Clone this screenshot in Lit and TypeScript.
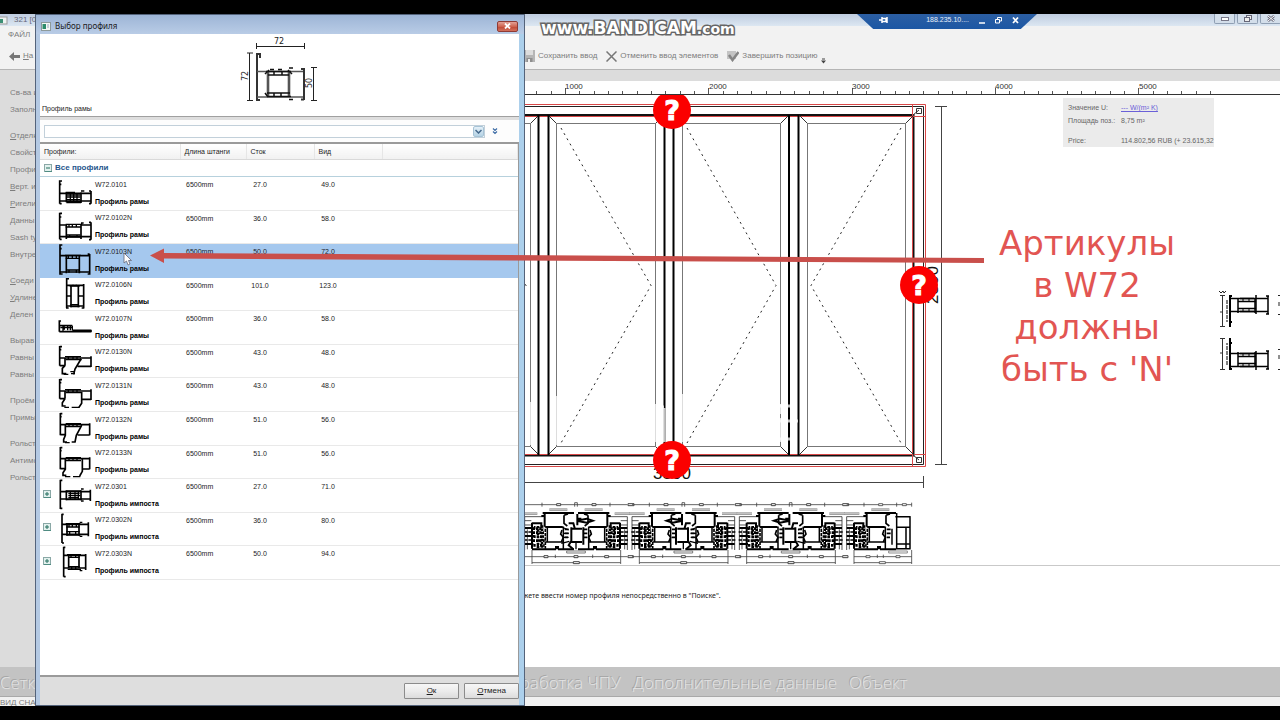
import { LitElement, html, svg, css } from "lit";
import { customElement, property } from "lit/decorators.js";

interface Profile {
  name: string;
  kind: string;
  stock: string;
  view: string;
  child?: boolean;
  selected?: boolean;
  shape: string;
  detail: string;
}

const FRAME = "Профиль рамы";
const MULLION = "Профиль импоста";

/* Cross-sections, drawn on a 108 x 96 grid. */
const profiles: Profile[] = [
  { name: "W72.0101", kind: FRAME, stock: "27.0", view: "49.0",
    shape: "M8 10V80M8 12h7M8 22h5M8 80h6M8 49H102M8 72H102M102 42V80M96 42h6M96 80h6M28 46V76M72 46V78M28 76h44",
    detail: "M26 46H54M30 60H70M30 54H70M30 68H70M40 46V76M50 50V72M60 50V76M72 42h10" },
  { name: "W72.0102N", kind: FRAME, stock: "36.0", view: "58.0",
    shape: "M8 5V85M8 7h7M8 18h5M8 85h6M8 42H30M72 42H102M8 77H102M102 34V86M96 34h6M96 86h6M28 42V84M72 40V84",
    detail: "M26 40H76M26 48H72M30 72H70M30 78H70M36 40v8M46 42v6M58 40v8M72 36h8M38 72v8M60 72v8" },
  { name: "W72.0103N", kind: FRAME, stock: "50.0", view: "72.0", selected: true,
    shape: "M9 1V92M9 3h7M9 14h5M9 90h8M9 35H98M9 84H98M98 30V92M92 30h6M92 90h6M28 35V88M67 35V88",
    detail: "M24 34H72M26 43H68M30 78H66M34 34v8M46 36v6M58 34v8M36 78v8M58 78v8" },
  { name: "W72.0106N", kind: FRAME, stock: "101.0", view: "123.0",
    shape: "M29 0V90M29 2h7M27 90h8M29 22H80M29 84H80M80 18V90M74 90h8M42 20V88M64 20V88",
    detail: "M38 24H68M40 80H66M40 86H68M29 54H42M64 54H80M48 20v4M58 20v4" },
  { name: "W72.0107N", kind: FRAME, stock: "36.0", view: "58.0",
    shape: "M7 28V62M7 30h5M7 44H46M7 62H102M46 58H102M102 56v8",
    detail: "M10 50H44M18 42V60M32 42V58M22 46V56M40 42V58M46 44V58" },
  { name: "W72.0130N", kind: FRAME, stock: "43.0", view: "48.0",
    shape: "M8 3V62M8 5h7M8 14h5M8 39H102M102 34V66M62 64H102M8 62H24M24 39V62M24 62L16 70V86H28M72 42L54 72L50 88",
    detail: "M24 35H72M26 44H74M34 34v10M48 36v8M60 34v10M20 88H34M42 86H54M40 80L54 80" },
  { name: "W72.0131N", kind: FRAME, stock: "43.0", view: "48.0",
    shape: "M8 3V62M8 5h7M8 14h5M8 39H102M102 34V66M74 64H102M8 62H24M24 39V62M24 62L16 74V84H26M74 42V76L66 88",
    detail: "M24 35H72M26 44H74M34 34v10M48 36v8M60 34v10M22 88H36M44 88H68" },
  { name: "W72.0132N", kind: FRAME, stock: "51.0", view: "56.0",
    shape: "M10 3V70M10 5h6M10 14h4M10 38H98M98 34V70M62 69H98M10 68H25M25 38V70L20 82V90H30M74 40L58 70L54 90",
    detail: "M26 35H72M26 44H72M36 34v8M48 34v8M60 34v8M24 92H38M44 90H56" },
  { name: "W72.0133N", kind: FRAME, stock: "51.0", view: "56.0",
    shape: "M10 3V70M10 5h6M10 14h4M10 38H98M98 34V70M76 69H98M10 68H25M25 38V70L18 80V88H28M76 40V76L68 90",
    detail: "M26 35H72M26 44H72M36 34v8M48 34v8M60 34v8M24 92H40M48 92H70" },
  { name: "W72.0301", kind: MULLION, stock: "27.0", view: "71.0", child: true,
    shape: "M10 2V90M10 4h6M10 88h6M10 38H100M10 60H100M100 32V66M28 34V64M72 34V64",
    detail: "M28 36H72M28 62H72M34 44H68M34 50H70M34 56H66M40 36V62M54 34V62M64 36V62M72 30h8M72 66h8" },
  { name: "W72.0302N", kind: MULLION, stock: "36.0", view: "80.0", child: true,
    shape: "M15 2V90M15 4h5M15 90h6M15 34H94M15 64H94M94 28V70M30 32V68M66 32V68",
    detail: "M26 32H70M28 42H68M28 56H68M28 66H70M36 32v10M46 32v10M58 32v10M38 56v10M56 56v10M68 28h8M68 70h8" },
  { name: "W72.0303N", kind: MULLION, stock: "50.0", view: "94.0", child: true,
    shape: "M20 2V92M20 4h5M20 92h6M20 28H86M20 66H86M86 24V72M35 28V68M66 28V68",
    detail: "M30 26H72M34 34H68M34 62H68M32 70H72M42 26v8M56 26v8M44 62v8M56 62v8M68 74h8" },
];

interface Command {
  text: string;
  hotkey?: boolean;
}

const sidebarGroups: Command[][] = [
  [{ text: "Св-ва и" }, { text: "Заполн" }],
  [
    { text: "Отделк", hotkey: true }, { text: "Свойст" }, { text: "Профи" }, { text: "Верт. и", hotkey: true },
    { text: "Ригели", hotkey: true }, { text: "Данны", hotkey: true }, { text: "Sash ty" }, { text: "Внутре" },
  ],
  [{ text: "Соеди", hotkey: true }, { text: "Удлине", hotkey: true }, { text: "Делен", hotkey: true }],
  [{ text: "Вырав" }, { text: "Равны" }, { text: "Равны" }],
  [{ text: "Проём" }, { text: "Примы" }],
  [{ text: "Рольст" }, { text: "Антимо" }, { text: "Рольст" }],
];

/* ---------------------------------------------------------------- dialog */

@customElement("profile-dialog")
class ProfileDialog extends LitElement {
  @property({ attribute: false }) items: Profile[] = profiles;

  static styles = css`
    :host {
      display: flex;
      flex-direction: column;
      box-sizing: border-box;
      border: 1px solid #54637a;
      padding: 0 5px 0 4px;
      background: linear-gradient(90deg, #b4c9e3 0, #b4c9e3 50%, #acd0ec 100%);
      font: 7px/10px "Liberation Sans", Arial, sans-serif;
      color: #1c1c1c;
    }
    button, input { font: inherit; color: inherit; box-sizing: border-box; margin: 0; padding: 0; }
    .title {
      display: flex;
      align-items: center;
      gap: 4px;
      height: 19px;
      margin: 0 -5px 0 -4px;
      padding: 3px 6px 0 5px;
      box-sizing: border-box;
      background: linear-gradient(#9db5d6, #b9cce6);
    }
    .title h1 { flex: 1; margin: 0; font: 8px/12px "Noto Sans", sans-serif; }
    .close {
      width: 21px;
      height: 11px;
      display: grid;
      place-items: center;
      border: 1px solid #8f3b35;
      border-radius: 2px;
      background: linear-gradient(#e2a196, #cf6450 50%, #c04a36 55%, #d2705c);
    }
    .preview {
      display: flex;
      flex-direction: column;
      align-items: center;
      height: 83px;
      box-sizing: border-box;
      padding: 3px 2px 1px;
      border-bottom: 1px solid #a0a0a0;
      background: #fff;
    }
    .preview p { align-self: flex-start; margin: 0; }
    .search {
      display: flex;
      align-items: center;
      gap: 6px;
      margin-top: 3px;
      height: 22px;
      padding: 0 4px;
      background: #fdfdfd;
      box-shadow: 0 -3px #dedede;
    }
    .combo { display: flex; align-items: center; width: 441px; height: 13px; box-sizing: border-box; border: 1px solid #c2d0da; background: #fff; }
    .combo input { flex: 1; min-width: 0; height: 11px; border: 0; background: none; outline: none; }
    .drop { width: 11px; height: 11px; border: 1px solid #a6c3d6; border-radius: 2px; background: linear-gradient(#e4f0f8, #b5d2e4); display: grid; place-items: center; }
    .more { border: 0; background: none; width: 8px; height: 11px; display: grid; place-items: center; }
    .list { flex: 1; min-height: 0; background: #fff; border: solid #9a9a9a; border-width: 2px 1px 2px 0; overflow: hidden; }
    table { width: 100%; border-collapse: collapse; table-layout: fixed; }
    th, td { padding: 0; text-align: left; vertical-align: top; }
    .c1 { width: 140px; }
    .c2 { width: 66px; }
    .c3, .c4 { width: 68px; }
    thead th {
      height: 15px;
      padding-left: 4px;
      vertical-align: middle;
      font-weight: 400;
      background: linear-gradient(#fff, #f1f1f1);
      border-right: 1px solid #e6e6e6;
      border-bottom: 1px solid #d9d9d9;
    }
    .group th { height: 16px; vertical-align: middle; border-bottom: 1px solid #b7d1dd; padding-left: 4px; color: #26558c; font-weight: 700; font-size: 8px; }
    .group span { display: flex; align-items: center; gap: 3px; }
    .rows { height: 403px; }
    .rows td { border-bottom: 1px solid #e9e9e9; padding-top: 3px; }
    .rows td.first { padding: 0; }
    .rows tr.selected td { background: #a5c8ee; border-color: #a5c8ee; }
    .item { display: grid; grid-template-columns: 12px 36px 1fr; align-items: center; gap: 0 2px; padding-left: 3px; }
    .item svg { display: block; }
    .names { display: flex; flex-direction: column; gap: 7px; }
    .names b { white-space: nowrap; color: #000; }
    .toggle { border: 0; background: none; width: 9px; height: 9px; }
    td.len { padding-left: 6px; }
    td.num span { display: block; width: 28px; text-align: center; }
    .footer { display: flex; justify-content: flex-end; align-items: center; gap: 5px; height: 28px; background: #dedede; }
    .footer button {
      width: 55px;
      height: 16px;
      border: 1px solid #8b8b8b;
      border-radius: 1px;
      background: linear-gradient(#f6f6f6, #ececec 50%, #dcdcdc);
      font-size: 8px;
      line-height: 12px;
    }
  `;

  private box(plus: boolean) {
    return svg`<svg width="8" height="8" viewBox="0 0 8 8"><rect x=".5" y=".5" width="7" height="7" fill="#e3f1ee" stroke="#8aa8a6"/><path d="M2 4h4${plus ? "M4 2v4" : ""}" stroke="#256e5f" fill="none"/><path d="M1 7.5h7" stroke="#4f8c82"/></svg>`;
  }

  private row(p: Profile) {
    return html`<tr class=${p.selected ? "selected" : ""}>
      <td class="first">
        <div class="item">
          <span>${p.child ? html`<button class="toggle" aria-label="+">${this.box(true)}</button>` : ""}</span>
          <svg width="36" height="32" viewBox="0 0 108 96" fill="none" stroke="#000">
            <path d=${p.shape} stroke-width="5" />
            <path d=${p.detail} stroke-width="4" />
          </svg>
          <div class="names"><span>${p.name}</span><b>${p.kind}</b></div>
        </div>
      </td>
      <td class="len">6500mm</td>
      <td class="num"><span>${p.stock}</span></td>
      <td class="num"><span>${p.view}</span></td>
      <td></td>
    </tr>`;
  }

  render() {
    return html`
      <header class="title">
        <svg width="10" height="9" viewBox="0 0 10 9"><rect x=".5" y=".5" width="9" height="8" fill="#f4f7f5" stroke="#8d9a9b" /><rect x="1.5" y="2" width="3.5" height="5" fill="#2c8b6b" /><path d="M6 3h2M6 5h2" stroke="#9ab" /></svg>
        <h1>Выбор профиля</h1>
        <button class="close" aria-label="✕"><svg width="7" height="6" viewBox="0 0 7 6"><path d="M1 .5L6 5.5M6 .5L1 5.5" stroke="#fff" stroke-width="1.8" /></svg></button>
      </header>
      <section class="preview">
        <svg width="80" height="67" viewBox="240 36 80 67" fill="none" stroke="#222">
          <path d="M256.500 45.500H304.500M256.500 42v6M304.500 42v6M249.500 52V99.500M247 52h6M247 99.500h6M313.500 66V99.500M311 66.500h6M311 99.500h6" />
          <path d="M257 52V100M257 53h4M260 53v4M257 99h3M304 67V99M301 68h3M301 98.500h3" stroke="#333" stroke-width="2" />
          <path d="M257 70.500H303M257 96H303" stroke="#555" stroke-width="1.600" />
          <path d="M268 71V95M289 71V95" stroke="#555" stroke-width="2.600" />
          <path d="M266 70.500H291M268 74H289M267 92H290M267 95.500H291M270 68.500h4M278 68.500h4M289 67h4M289 98.500h4M265 73l4-4M292 73l-4-4M265 92l3 4M274 92v3M281 92v3M274 70v4M282 70v4" stroke="#111" stroke-width="1.500" />
          <g fill="#222" stroke="none" font-family="DejaVu Sans, sans-serif" font-size="8" text-anchor="middle">
            <text x="279" y="43">72</text>
            <text transform="translate(248 75) rotate(-90)">72</text>
            <text transform="translate(312 82) rotate(-90)">50</text>
          </g>
        </svg>
        <p>Профиль рамы</p>
      </section>
      <div class="search">
        <div class="combo">
          <input type="text" aria-label="Поиск" />
          <button class="drop" aria-label="▾"><svg width="7" height="5" viewBox="0 0 7 5"><path d="M.5 1L3.500 4L6.500 1" stroke="#44688c" fill="none" stroke-width="1.500" /></svg></button>
        </div>
        <button class="more" aria-label="»"><svg width="6" height="7" viewBox="0 0 6 7"><path d="M1 .5L3 2.500L5 .5M1 3.500L3 5.500L5 3.500" stroke="#3d6ca5" fill="none" stroke-width="1.200" /></svg></button>
      </div>
      <div class="list">
        <table>
          <colgroup><col class="c1" /><col class="c2" /><col class="c3" /><col class="c4" /><col /></colgroup>
          <thead><tr><th>Профили:</th><th>Длина штанги</th><th>Сток</th><th>Вид</th><th></th></tr></thead>
          <tbody class="group"><tr><th colspan="5"><span>${this.box(false)}Все профили</span></th></tr></tbody>
        </table>
        <table class="rows">
          <colgroup><col class="c1" /><col class="c2" /><col class="c3" /><col class="c4" /><col /></colgroup>
          <tbody>${this.items.map((p) => this.row(p))}</tbody>
        </table>
      </div>
      <footer class="footer">
        <button><u>О</u>к</button>
        <button><u>О</u>тмена</button>
      </footer>
    `;
  }
}

/* --------------------------------------------------------------- drawing */

@customElement("window-drawing")
class WindowDrawing extends LitElement {
  static styles = css`
    :host { display: block; overflow: hidden; }
    svg { display: block; }
    text { font-family: "Liberation Sans", Arial, sans-serif; }
    .mark { font: 700 27px "DejaVu Sans", sans-serif; fill: #fff; stroke: #fff; stroke-width: 1px; }
    .dim { font-size: 17px; fill: #111; }
    .scale { font-size: 8px; fill: #333; }
  `;

  private question(x: number, y: number) {
    return svg`<circle cx=${x} cy=${y} r="19" fill="#fb0000"/><text class="mark" x=${x} y=${y + 10} text-anchor="middle">?</text>`;
  }

  private ruler() {
    const ticks: string[] = [];
    for (let i = -4; i <= 45; i++) {
      const x = Math.round(565 + i * 14.33) + 0.5;
      ticks.push(`M${x} 94v-${i % 10 === 0 ? 6 : 3}`);
    }
    return svg`
      <rect x="200" y="81" width="1080" height="13" fill="#fff"/>
      <path d=${ticks.join("")} stroke="#555" fill="none"/>
      <path d="M200 94.500H1280" stroke="#333"/>
      ${[1, 2, 3, 4, 5].map((k) => svg`<text class="scale" x=${422 + Math.round(k * 143.3)} y="89">${k * 1000}</text>`)}`;
  }

  private sash(l: number, r: number, dir: number) {
    const a = dir > 0 ? l + 5 : r - 4;
    const b = dir > 0 ? r - 4 : l + 4;
    return svg`
      <rect x=${l + 0.5} y="123.500" width=${r - l} height="323" stroke="#777"/>
      <path d="M${l - 8} 115L${l} 123M${r + 9} 115L${r + 1} 123M${l - 8} 455L${l} 447M${r + 9} 455L${r + 1} 447" stroke="#333"/>
      <path d="M${a} 128L${b} 285.500L${a} 443" stroke="#222" stroke-dasharray="2 4"/>`;
  }

  /* Half of a sash section on a coarse grid: glazing gasket, hardware groove and chambers. */
  private half() {
    return svg`
      <path d="M-8 131h46M74 119h54" stroke="#777" stroke-width="7"/>
      <path d="M-8 131h46M74 119h54" stroke="#fff" stroke-width="2"/>
      <path d="M0 140h56M0 152h20M0 165h20M0 140V240M8 178v60" stroke="#333" stroke-width="2.500"/>
      <path d="M54 129H148M60 129V170M50 138h10M0 174H26M0 198H30M0 222H26M22 238H94M22 158V236M22 160H50V174M100 238H148M94 228v10M100 228v10" stroke-width="6"/>
      <path d="M62 172H116V216H62M68 172v44M116 172V238M60 170h54" stroke-width="4.500"/>
      <path d="M24 176H56M24 188H58M26 200H58M24 212H60M26 226H60M40 168V236M52 166V236" stroke-width="8" stroke-dasharray="7 3"/>
      <path d="M30 168v12M-2 186h24M-2 210h24M62 176V236" stroke-width="5" stroke-dasharray="10 3"/>
      <path d="M118 136l12-4M118 136v24l10 8M112 180l-4 12 8 10-6 14M120 178h12M120 190h12M120 202h10" stroke-width="5"/>`;
  }

  private section(x: number, mirrored: boolean) {
    const core = svg`
      <path d="M132 172V224M168 172V216M136 176H168M136 216H172M104 152l18-6 30 6-30 6zM150 132v34M138 146h12M176 160h-14l-4 14M168 212l8 14-14 12" stroke-width="6"/>
      <path d="M176 180l14-6M176 190h16M176 202h18M174 214l24 6M154 216v22" stroke-width="4"/>`;
    return svg`<g transform="translate(${x} 0)">
      ${this.half()}
      <g transform="translate(308 0) scale(-1 1)">${this.half()}</g>
      ${mirrored ? core : svg`<g transform="translate(308 0) scale(-1 1)">${core}</g>`}
      <path d="M0 104H308M52 98v12M256 98v12M150 98v12M158 98v12M150 98h8M0 260H308M92 254v10M204 254v10M22 278H288M22 240v42M288 240v42" stroke="#444" stroke-width="2.500"/>
      <path d="M96 101h12v6h-12zM202 101h12v6h-12zM310 101h18v6h-18zM58 257h12v6h-12zM148 257h12v6h-12zM240 257h12v6h-12zM310 257h16v6h-16zM146 275h18v6h-18z" fill="#fff" stroke="#444" stroke-width="3"/>
      <path d="M126 243h56v6h-56z" fill="#fff" stroke="#777" stroke-width="3"/>
    </g>`;
  }

  private thumb(y: number, flip: boolean) {
    return svg`<g transform="translate(1220 ${y}) scale(1 ${flip ? -1 : 1})" stroke="#000">
      <path d="M2.500 0V32M0 .5h5M0 31.500h5M0 17h3" stroke="#333"/>
      <path d="M10 0V32M9 1h3M10 27h2" stroke-width="2"/>
      <path d="M10 3.500H48M10 16.500H48M48 1V19M46 1h3M46 19h3M36 0v19" stroke-width="1.500"/>
      <path d="M18 3V18M35 3V18M18 6.500H36M18 13.500H36M20 3.500H34M20 16.500H34" stroke-width="1.500"/>
      <path d="M23 3v4M29 3v4M23 13v4M29 13v4M7 5v22" stroke-dasharray="4 1"/>
    </g>`;
  }

  render() {
    return html`<svg width="1080" height="484" viewBox="200 81 1080 484" fill="none">
      <path d="M200 106.500H923.500V464.500H200" stroke="#222" />
      <path d="M200 115H913.500V455.500H200" stroke="#111" stroke-width="2" />
      <path d="M200 104.500H925.500V466.500H200M912.500 104V466M200 116.500H925M200 454.500H925" stroke="#d84848" />
      ${this.sash(431, 530, 1)}${this.sash(556, 655, 1)}${this.sash(682, 780, 1)}${this.sash(807, 905, -1)}
      <path d="M538.500 115V455M548.500 115V455M664.500 115V455M673.500 115V455M789 115V455M798.500 115V455" stroke="#000" stroke-width="2" />
      <path d="M913 115l6-5M913 455l6 5M916.500 108.500h5v5h-5zM916.500 457.500h5v5h-5z" stroke="#333" />
      <g stroke="#fff" stroke-opacity=".75" stroke-width="3">
        <path d="M530 402V445M556 396V445M655 404V442M664 408V442M682 394V442M780 404V414M780 418V442" />
        <path d="M778 406h12M778 421h20M778 439h12M656 407h8" />
      </g>
      <path d="M941.500 106V464M935 106.500h12M935 464.500h12M200 482.500H923M923.500 476v12" stroke="#444" />
      <text class="dim" x="672" y="479" text-anchor="middle">3500</text>
      <text class="dim" transform="translate(938 285) rotate(-90)" text-anchor="middle">2500</text>
      ${this.question(672, 110)}${this.question(672, 460)}${this.question(919, 285)}
      ${this.ruler()}
      <g transform="translate(520 470) scale(.33333)" stroke="#000">
        ${this.section(14, false)}${this.section(336, true)}${this.section(658, true)}
        <g transform="translate(980 0)">
          ${this.half()}
          <path d="M150 129V236M146 140H192M190 140V236M178 172V236M150 172H190M148 236H192M150 222H190M136 176V224" stroke-width="4.500" />
          <path d="M0 104H195M52 98v12M150 98v12M195 98v12M22 260H195M92 254v10M110 254v10M22 278H195M22 240v42M195 240v42" stroke="#444" stroke-width="2.500" />
          <path d="M96 101h12v6h-12zM167 101h12v6h-12zM58 257h12v6h-12zM148 257h12v6h-12zM98 275h18v6h-18z" fill="#fff" stroke="#444" stroke-width="2.500" />
          <path d="M126 243h56v6h-56z" fill="#fff" stroke="#777" stroke-width="2.500" />
        </g>
      </g>
      ${this.thumb(295, false)}${this.thumb(370, true)}
      <path d="M1219 291l2 2 2-2M1223 291l1 2 2-2M1278 295.500h2M1279 302v4M1278 314.500h2M1278 349.500h2M1279 355v4M1278 369.500h2" stroke="#222" />
    </svg>`;
  }
}

/* ------------------------------------------------------------------ page */

@customElement("app-root")
class AppRoot extends LitElement {
  static styles = css`
    :host {
      display: flex;
      flex-direction: column;
      position: relative;
      height: 100vh;
      box-sizing: border-box;
      padding: 14px 0;
      overflow: hidden;
      background: #000;
      color: #7d7d7d;
      font: 8px/12px "Liberation Sans", Arial, sans-serif;
    }
    button { font: inherit; color: inherit; background: none; border: 0; padding: 0; margin: 0; white-space: nowrap; }
    .caption { display: flex; justify-content: space-between; height: 12px; background: linear-gradient(#bfccdf, #dce7f2); color: #667; }
    .caption-name { display: flex; align-items: center; gap: 6px; }
    .frame-buttons { display: flex; gap: 2px; }
    .frame-buttons button { width: 21px; height: 10px; display: grid; place-items: center; border: 1px solid #8f9fb3; border-top: 0; border-radius: 0 0 2px 2px; background: #d3deea; }
    .frame-buttons button:last-child { margin-right: -1px; }
    .menu { height: 17px; padding-left: 8px; display: flex; align-items: center; background: #f2f2f2; }
    .tools { display: grid; grid-template-columns: 524px 1fr; height: 27px; align-items: center; background: #f2f2f2; border-bottom: 1px solid #b5b5b5; box-sizing: border-box; }
    .tools div { display: flex; align-items: center; gap: 9px; }
    .tools .back { padding-left: 9px; }
    .tools button { display: flex; align-items: center; gap: 3px; }
    .band { height: 11px; background: #dcdcdc; }
    .work { flex: 1; min-height: 0; display: grid; grid-template-columns: 200px 1fr; background: #dcdcdc; }
    .side { display: flex; flex-direction: column; gap: 9px; padding: 3px 0 0 10px; background: #dcdcdc; }
    .side ul { list-style: none; margin: 0; padding: 0; }
    .side li { line-height: 17px; }
    .side a { display: block; color: inherit; text-decoration: none; }
    .side .hotkey::first-letter { text-decoration: underline; }
    .canvas { background: #fff; min-width: 0; }
    .note { margin: 0; border-top: 1px solid #c9c9c9; padding: 24px 0 0 302px; color: #222; font: 7px/12px "Noto Sans", sans-serif; }
    .tabs { display: flex; gap: 12px; height: 30px; align-items: center; padding-top: 2px; background: #c3c3c3; border-bottom: 1px solid #a9a9a9; box-sizing: border-box; }
    .tabs button { font: 300 17px/24px "Open Sans", sans-serif; color: #e4e4e4; text-shadow: -1px -1px #a4a4a4; }
    .tabs button:first-child { width: 485px; text-align: left; }
    .status { height: 9px; overflow: hidden; background: #f1f1f1; }
    .dialog { position: absolute; left: 35px; top: 14px; bottom: 14px; width: 490px; }
    .remote {
      position: absolute; top: 14px; left: 857px; width: 180px; height: 15px; box-sizing: border-box; padding: 0 18px 3px 20px;
      display: flex; align-items: center; gap: 10px; color: #e8f1fb; font-size: 7px;
      background: linear-gradient(#2c5fa3, #1c57a4); clip-path: polygon(0 0, 100% 0, 91% 100%, 9% 100%);
    }
    .remote span { flex: 1; text-align: right; }
    .remote button { display: grid; }
    .facts {
      position: absolute; left: 1063px; top: 98px; width: 151px; height: 49px; box-sizing: border-box; margin: 0; padding: 4px 0 0 5px; overflow: hidden;
      display: grid; grid-template-columns: 53px 1fr; grid-template-rows: 13px 20px 13px; white-space: nowrap; background: #ebebeb; color: #666; font-size: 7px;
    }
    .facts dt, .facts dd { margin: 0; }
    .facts a { color: #6a60d8; }
    .watermark { position: absolute; left: 541px; top: 17px; color: #fff; font: 700 17px/22px "DejaVu Sans", sans-serif; paint-order: stroke fill; -webkit-text-stroke: 3px #666; }
    .watermark small { font-size: 14px; }
    .hint { position: absolute; left: 987px; top: 222px; width: 200px; margin: 0; text-align: center; color: #e25552; font: 34px/42px "DejaVu Sans", sans-serif; }
    .arrow { position: absolute; left: 148px; top: 246px; pointer-events: none; }
    .pointer { position: absolute; left: 123px; top: 252px; }
  `;

  render() {
    return html`
      <header>
        <div class="caption">
          <div class="caption-name">
            <svg width="8" height="9" viewBox="0 0 8 9"><rect x="-1" y="1" width="8" height="7" fill="#eef3f1" stroke="#999" /><rect x="0" y="3" width="3" height="4" fill="#3b8f74" /></svg>
            321 [0
          </div>
          <div class="frame-buttons">
            <button aria-label="–"><svg width="8" height="4" viewBox="0 0 8 4"><rect x=".5" y=".5" width="7" height="3" fill="#fff" stroke="#778" /></svg></button>
            <button aria-label="❐"><svg width="8" height="7" viewBox="0 0 8 7" fill="#eee" stroke="#667"><rect x="2.500" y=".5" width="5" height="4" /><rect x=".5" y="2.500" width="5" height="4" /></svg></button>
            <button aria-label="✕"><svg width="8" height="7" viewBox="0 0 8 7"><path d="M1 1L7 6M7 1L1 6" stroke="#667" stroke-width="2.500" /><path d="M1 1L7 6M7 1L1 6" stroke="#fff" /></svg></button>
          </div>
        </div>
        <nav class="menu"><button>ФАЙЛ</button></nav>
        <div class="tools">
          <div class="back"><button><svg width="11" height="9" viewBox="0 0 11 9"><path d="M0 4.500L5 0V3H11V6H5V9Z" fill="#777" /></svg><span><u>Н</u>а</span></button></div>
          <div>
            <button><svg width="11" height="12" viewBox="0 0 11 12"><path d="M0 0H11V12H0Z" fill="#b5b5b5" /><path d="M2 0h7v5H2z" fill="#ddd" /><path d="M2.500 8h6v4h-6z" fill="#8f8f8f" /><path d="M4 9h2v3h-2z" fill="#eee" /></svg>Сохранить ввод</button>
            <button><svg width="11" height="11" viewBox="0 0 11 11"><path d="M.5 .5L10.500 10.500M10.500 .5L.5 10.500" stroke="#777" stroke-width="1.500" /></svg>Отменить ввод элементов</button>
            <button><svg width="12" height="12" viewBox="0 0 12 12"><path d="M0 1H9V9H0Z" fill="#c4c4c4" /><path d="M2 5L5.500 10L11.500 2" fill="none" stroke="#858585" stroke-width="2.500" /></svg>Завершить позицию <svg width="5" height="16" viewBox="0 0 5 16"><path d="M0 12.500H5L2.500 15.500ZM1 10.500h3v1h-3z" fill="#444" /></svg></button>
          </div>
        </div>
        <div class="band"></div>
      </header>
      <main class="work">
        <nav class="side">
          ${sidebarGroups.map((g) => html`<ul>${g.map((c) => html`<li><a href="#" class=${c.hotkey ? "hotkey" : ""}>${c.text}</a></li>`)}</ul>`)}
        </nav>
        <div class="canvas">
          <window-drawing></window-drawing>
          <p class="note">Вы можете ввести номер профиля непосредственно в "Поиске".</p>
        </div>
      </main>
      <nav class="tabs"><button>Сетка</button><button>Обработка ЧПУ</button><button>Дополнительные данные</button><button>Объект</button></nav>
      <footer class="status">ВИД СНАРУЖИ</footer>

      <dl class="facts">
        <dt>Значение U:</dt><dd><a href="#">--- W/(m² K)</a></dd>
        <dt>Площадь поз.:</dt><dd>8,75 m²</dd>
        <dt>Price:</dt><dd>114.802,56 RUB (+ 23.615,32</dd>
      </dl>
      <div class="remote">
        <svg width="12" height="8" viewBox="0 0 12 8"><path d="M2 4h3M5 1v6M5 2.500h4v3H5M10 1v6" stroke="#fff" stroke-width="1.500" fill="none" /></svg>
        <span>188.235.10....</span>
        <button aria-label="–"><svg width="6" height="8" viewBox="0 0 6 8"><path d="M0 7h6" stroke="#fff" stroke-width="1.500" /></svg></button>
        <button aria-label="❐"><svg width="7" height="8" viewBox="0 0 7 8" fill="none" stroke="#fff"><path d="M2.500 3V1.500H6.500V5H5" /><path d="M.5 3.500h4v3.500h-4z" /></svg></button>
        <button aria-label="✕"><svg width="7" height="8" viewBox="0 0 7 8"><path d="M1 1.500L6 7M6 1.500L1 7" stroke="#fff" stroke-width="1.800" /></svg></button>
      </div>
      <div class="watermark">www.BANDICAM<small>.com</small></div>
      <profile-dialog class="dialog"></profile-dialog>
      <svg class="pointer" width="10" height="14" viewBox="0 0 10 14"><path d="M1 1V11L3.500 9L5 13L7 12L5.500 8.500H8.500Z" fill="#fff" stroke="#667" stroke-width=".8" /></svg>
      <svg class="arrow" width="838" height="20" viewBox="148 246 838 20"><path d="M150 255.500L164 248.500V253L984 258V263L164 258.500V263Z" fill="#c94f4b" /></svg>
      <p class="hint">Артикулы<br />в W72<br />должны<br />быть с 'N'</p>
    `;
  }
}
